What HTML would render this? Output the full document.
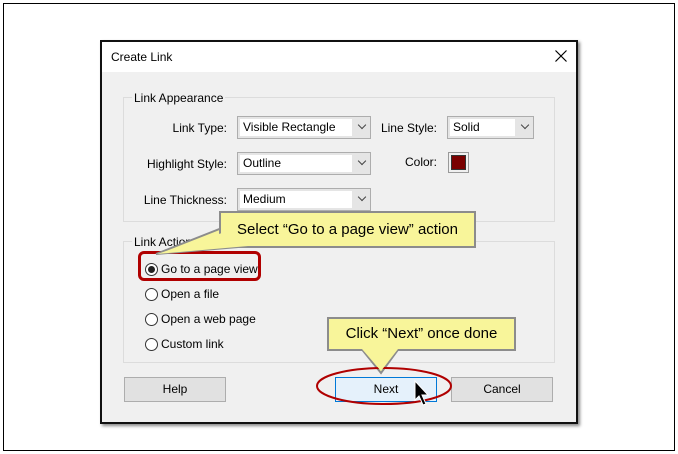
<!DOCTYPE html>
<html><head><style>
*{margin:0;padding:0;box-sizing:border-box}
body{width:678px;height:454px;background:#fff;position:relative;font-family:"Liberation Sans",sans-serif;font-size:12px;color:#000;overflow:hidden}
.a{position:absolute}
.outer{left:3px;top:3px;width:672px;height:448px;border:1.5px solid #000}
.dlg{left:100px;top:40px;width:478px;height:384px;border:2px solid #111;background:#f0f0f0;box-shadow:2px 2px 3px #888}
.title{left:0;top:0;width:474px;height:30px;background:#fff}
.grp{border:1px solid #dcdcdc}
.lbl{background:#f0f0f0;padding:0 2px}
.combo{border:1px solid #adadad;background:#e5e5e5;height:23px}
.combo span{position:absolute;left:2px;top:2px;bottom:2px;right:18px;background:#fff;padding-left:3px;line-height:17px}
.combo i{position:absolute;right:5px;top:5px;width:6px;height:6px;border-right:1px solid #444;border-bottom:1px solid #444;transform:rotate(45deg)}
.r{text-align:right}
.radio{width:13px;height:13px;border:1px solid #333;border-radius:50%;background:#fff}
.btn{width:102px;height:25px;border:1px solid #adadad;background:#e1e1e1;text-align:center;line-height:23px}
.call{background:#f8f59a;border:2px solid #8c8c8c;font-size:15px;text-align:center}
</style></head><body>
<div class="a outer"></div>
<div class="a dlg">
 <div class="a title"></div>
 <div class="a" style="left:9px;top:8px">Create Link</div>
 <svg class="a" style="left:453px;top:8px" width="12" height="12"><path d="M0.5,0.5L11.5,11.5M11.5,0.5L0.5,11.5" stroke="#000" stroke-width="1.2"/></svg>
 <div class="a grp" style="left:21px;top:55px;width:432px;height:125px"></div>
 <div class="a lbl" style="left:30px;top:49px">Link Appearance</div>
 <div class="a r" style="left:20px;top:79px;width:105px">Link Type:</div>
 <div class="a combo" style="left:135px;top:74px;width:134px"><span>Visible Rectangle</span><i></i></div>
 <div class="a r" style="left:270px;top:79px;width:65px">Line Style:</div>
 <div class="a combo" style="left:345px;top:74px;width:87px"><span>Solid</span><i></i></div>
 <div class="a r" style="left:20px;top:115px;width:105px">Highlight Style:</div>
 <div class="a combo" style="left:135px;top:110px;width:134px"><span>Outline</span><i></i></div>
 <div class="a r" style="left:270px;top:113px;width:65px">Color:</div>
 <div class="a" style="left:346px;top:110px;width:21px;height:21px;border:1px solid #999;background:#f0f0f0;padding:2px"><div style="width:15px;height:15px;background:#7a0000;border:1px solid #333"></div></div>
 <div class="a r" style="left:20px;top:151px;width:105px">Line Thickness:</div>
 <div class="a combo" style="left:135px;top:146px;width:134px"><span>Medium</span><i></i></div>
 <div class="a grp" style="left:21px;top:199px;width:432px;height:122px"></div>
 <div class="a lbl" style="left:30px;top:193px">Link Action</div>
 <div class="a radio" style="left:43px;top:221px"><div style="width:7px;height:7px;border-radius:50%;background:#222;margin:2px"></div></div>
 <div class="a" style="left:59px;top:220px">Go to a page view</div>
 <div class="a radio" style="left:43px;top:246px"></div><div class="a" style="left:59px;top:245px">Open a file</div>
 <div class="a radio" style="left:43px;top:271px"></div><div class="a" style="left:59px;top:270px">Open a web page</div>
 <div class="a radio" style="left:43px;top:296px"></div><div class="a" style="left:59px;top:295px">Custom link</div>
 <div class="a btn" style="left:22px;top:335px">Help</div>
 <div class="a btn" style="left:233px;top:335px;border-color:#0078d7;background:#e5f1fb">Next</div>
 <div class="a btn" style="left:349px;top:335px">Cancel</div>
</div>
<div class="a" style="left:138px;top:251px;width:123px;height:30px;border:3px solid #b00000;border-radius:6px"></div>
<svg class="a" style="left:0;top:0" width="678" height="454">
 <polygon points="222,228 250,246 156,254" fill="#f8f59a" stroke="#8c8c8c" stroke-width="2"/>
 <polygon points="360,347 400,347 381,373" fill="#f8f59a" stroke="#8c8c8c" stroke-width="2"/>
 <ellipse cx="384" cy="386" rx="67" ry="18" fill="none" stroke="#b00000" stroke-width="2"/>
 <path d="M415,381 L415,400 L419,396 L423,405 L426,404 L422,395 L428,395 Z" fill="#000" stroke="#fff" stroke-width="1"/>
</svg>
<div class="a call" style="left:219px;top:211px;width:257px;height:37px;line-height:33px">Select “Go to a page view” action</div>
<div class="a call" style="left:327px;top:317px;width:189px;height:34px;line-height:30px">Click “Next” once done</div>
<svg class="a" style="left:0;top:0" width="678" height="454"><polygon points="222,233 248,246 157,254" fill="#f8f59a"/><polygon points="362,349 398,349 381,371" fill="#f8f59a"/></svg>
</body></html>
